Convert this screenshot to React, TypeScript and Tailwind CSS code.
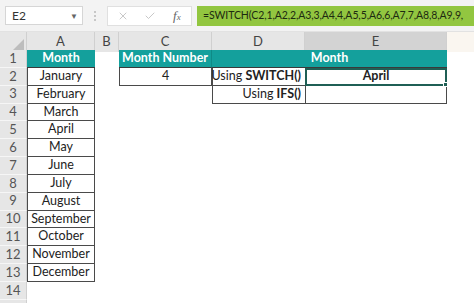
import { X, Check } from 'lucide-react';

const months = [
  'January', 'February', 'March', 'April', 'May', 'June',
  'July', 'August', 'September', 'October', 'November', 'December',
];

const cols = ['A', 'B', 'C', 'D', 'E'];

export default function App() {
  const rows = Array.from({ length: 15 }, (_, i) => i + 1);

  return (
    <div className="w-[474px] h-[303px] overflow-hidden bg-white font-['Lato',sans-serif] text-[#222]">
      {/* Formula bar */}
      <div className="h-[32px] bg-[#f3f3f3] flex items-center pl-[5px] border-b border-[#e2e2e2]">
        <div className="w-[78px] h-[19px] bg-white border border-[#d6d6d6] flex items-center justify-between pl-[6px] pr-[4px] text-[12px] text-[#333]">
          <span>E2</span>
          <span className="text-[8px] text-[#666]">▼</span>
        </div>
        <div className="w-[24px] flex flex-col items-center gap-[2px]">
          <span className="w-[2px] h-[2px] bg-[#b8b8b8] rounded-full" />
          <span className="w-[2px] h-[2px] bg-[#b8b8b8] rounded-full" />
          <span className="w-[2px] h-[2px] bg-[#b8b8b8] rounded-full" />
        </div>
        <div className="w-[85px] h-[20px] bg-white border border-[#e0e0e0] flex items-center pl-[9px]">
          <X className="w-[12px] h-[12px] text-[#b5b5b5]" strokeWidth={1.5} />
          <Check className="w-[12px] h-[12px] text-[#b5b5b5] ml-[15px]" strokeWidth={1.5} />
          <span className="ml-[17px] font-['Liberation_Serif',serif] italic text-[13px] text-[#666]">
            f<span className="text-[9px]">x</span>
          </span>
        </div>
        <div className="ml-[5px] flex-1 h-[20px] bg-[#92c640] flex items-center pl-[6px] text-[10.5px] tracking-[-0.1px] text-[#1d2a10] whitespace-nowrap overflow-hidden">
          =SWITCH(C2,1,A2,2,A3,3,A4,4,A5,5,A6,6,A7,7,A8,8,A9,9,
        </div>
      </div>

      {/* Column headers */}
      <div className="grid grid-cols-[27px_68px_24px_93px_93px_142px_1fr] h-[18px] text-[13px] text-[#444]">
        <div className="bg-[#e6e6e6] border-r border-[#d0d0d0] flex items-end justify-end pr-[2px] pb-[2px]">
          <div className="w-0 h-0 border-l-[11px] border-l-transparent border-b-[11px] border-b-[#bdbdbd]" />
        </div>
        {cols.map((c) => (
          <div
            key={c}
            className={`flex items-center justify-center border-r border-[#d0d0d0] ${
              c === 'E' ? 'bg-[#d3d3d3]' : 'bg-[#e6e6e6]'
            }`}
          >
            {c}
          </div>
        ))}
        <div className="bg-[#faf6f0]" />
      </div>

      {/* Sheet */}
      <div className="grid grid-cols-[27px_68px_24px_93px_93px_142px_1fr] auto-rows-[17.85px] text-[12.5px]">
        {rows.map((r) => {
          const m = months[r - 2];
          return (
            <div key={r} className="contents">
              <div className="bg-[#e6e6e6] border-b border-[#f6f6f6] border-r border-r-[#d0d0d0] flex items-center justify-center text-[13px] text-[#555]">
                {r < 15 ? r : ''}
              </div>

              {/* A */}
              {r === 1 ? (
                <div className="bg-[#14a09c] text-white font-bold flex items-center justify-center border-b border-[#3a3a3a]">
                  Month
                </div>
              ) : m ? (
                <div className="border-x border-b border-[#4a4a4a] flex items-center justify-center">{m}</div>
              ) : (
                <div />
              )}

              {/* B */}
              <div />

              {/* C */}
              {r === 1 ? (
                <div className="bg-[#14a09c] text-white font-bold flex items-center justify-center border-b border-[#3a3a3a] border-r border-r-[#0f8a86]">
                  Month Number
                </div>
              ) : r === 2 ? (
                <div className="border-x border-b border-[#4a4a4a] flex items-center justify-center">4</div>
              ) : (
                <div />
              )}

              {/* D + E */}
              {r === 1 ? (
                <div className="col-span-2 bg-[#14a09c] text-white font-bold flex items-center justify-center border-b border-[#3a3a3a]">
                  Month
                </div>
              ) : r === 2 ? (
                <>
                  <div className="border-l border-b border-[#4a4a4a] flex items-center justify-end pr-[4px] whitespace-nowrap">
                    Using&nbsp;<span className="font-bold">SWITCH()</span>
                  </div>
                  <div className="relative border-2 border-[#1f5f55] flex items-center justify-center font-bold">
                    April
                    <span className="absolute -right-[3px] -bottom-[3px] w-[5px] h-[5px] bg-[#1f5f55] border border-white" />
                  </div>
                </>
              ) : r === 3 ? (
                <>
                  <div className="border-l border-b border-[#4a4a4a] flex items-center justify-end pr-[4px] whitespace-nowrap">
                    Using&nbsp;<span className="font-bold">IFS()</span>
                  </div>
                  <div className="border-x border-b border-[#4a4a4a]" />
                </>
              ) : (
                <>
                  <div />
                  <div />
                </>
              )}

              <div />
            </div>
          );
        })}
      </div>
    </div>
  );
}
